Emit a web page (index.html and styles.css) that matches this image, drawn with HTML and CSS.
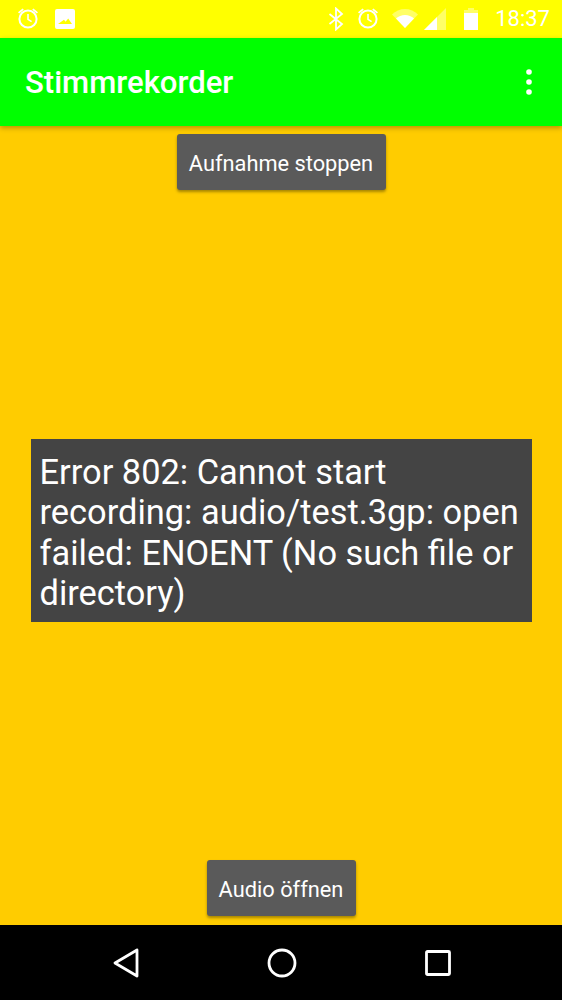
FILE: index.html
```html
<!DOCTYPE html>
<html lang="de">
<head>
<meta charset="utf-8">
<title>Stimmrekorder</title>
<link rel="stylesheet" href="styles.css">
</head>
<body>
<div class="phone">
  <header class="status">
    <div class="status-left">
      <svg class="ic-alarm" viewBox="0 0 24 24"><circle cx="12" cy="13" r="8.6" fill="none" stroke="#fff" stroke-width="2"/><path d="M12 8v5.4l3.6 2.2" fill="none" stroke="#fff" stroke-width="1.6"/><path d="M2 6.2 6.6 2.4 7.8 3.8 3.2 7.6zM22 6.2 17.4 2.4 16.2 3.8 20.8 7.6z" fill="#fff"/></svg>
      <svg class="ic-image" viewBox="0 0 20 20"><path fill-rule="evenodd" d="M2 0h16a2 2 0 0 1 2 2v16a2 2 0 0 1-2 2H2a2 2 0 0 1-2-2V2a2 2 0 0 1 2-2zM3 15h14l-3.800-5.600-2.600 3.400-1.600-2z" fill="#fff"/></svg>
    </div>
    <div class="status-right">
      <svg class="ic-bt" viewBox="0 0 16 24"><path d="M1.500 7 14 17 8 22.500V1.500l6 5.500L1.500 17" fill="none" stroke="#fff" stroke-width="1.800"/></svg>
      <svg class="ic-alarm" viewBox="0 0 24 24"><circle cx="12" cy="13" r="8.600" fill="none" stroke="#fff" stroke-width="2"/><path d="M12 8v5.400l3.600 2.200" fill="none" stroke="#fff" stroke-width="1.600"/><path d="M2 6.200 6.600 2.400 7.800 3.800 3.200 7.600zM22 6.200 17.400 2.400 16.200 3.800 20.800 7.600z" fill="#fff"/></svg>
      <svg class="ic-wifi" viewBox="0 0 26 19"><path d="M0 5.500C3.500 2 8 0 13 0s9.500 2 13 5.500L13 19z" fill="#fff" opacity=".4"/><path d="M4 9.500C6.500 7.300 9.500 6 13 6s6.500 1.300 9 3.500L13 19z" fill="#fff"/></svg>
      <svg class="ic-signal" viewBox="0 0 22 22"><path d="M0 22 22 0v22z" fill="#fff" opacity=".4"/><path d="M0 22 13 9v13z" fill="#fff"/></svg>
      <svg class="ic-battery" viewBox="0 0 14 22"><path d="M0 2h4V0h6v2h4v4H0z" fill="#fff" opacity=".4"/><path d="M0 5h14v17H0z" fill="#fff"/></svg>
      <span class="clock">18:37</span>
    </div>
  </header>
  <div class="appbar">
    <h1 class="title">Stimmrekorder</h1>
    <svg class="overflow" viewBox="0 0 6 26"><circle cx="3" cy="3" r="2.800" fill="#fff"/><circle cx="3" cy="13" r="2.800" fill="#fff"/><circle cx="3" cy="23" r="2.800" fill="#fff"/></svg>
  </div>
  <main class="content">
    <button class="btn btn-stop">Aufnahme stoppen</button>
    <p class="error">Error 802: Cannot start recording: audio/test.3gp: open failed: ENOENT (No such file or directory)</p>
    <button class="btn btn-open">Audio öffnen</button>
  </main>
  <nav class="navbar">
    <svg class="nav-back" viewBox="0 0 26 30"><path d="M24 2 2 15l22 13z" fill="none" stroke="#fff" stroke-width="2.800" stroke-linejoin="round"/></svg>
    <svg class="nav-home" viewBox="0 0 30 30"><circle cx="15" cy="15" r="13" fill="none" stroke="#fff" stroke-width="2.800"/></svg>
    <svg class="nav-recent" viewBox="0 0 26 26"><rect x="1.500" y="1.500" width="23" height="23" rx="1" fill="none" stroke="#fff" stroke-width="2.800"/></svg>
  </nav>
</div>
</body>
</html>
```

FILE: styles.css
```css
* { box-sizing: border-box; }
html, body { margin: 0; padding: 0; }
body { font-family: Roboto, "Liberation Sans", sans-serif; }
.phone { width: 562px; height: 1000px; display: flex; flex-direction: column; background: #ffcc00; overflow: hidden; }
.status { height: 38px; flex: none; background: #ffff00; display: flex; justify-content: space-between; align-items: center; padding: 0 12px 0 16px; }
.status-left, .status-right { display: flex; align-items: center; }
.status-left { gap: 15px; }
.status-left .ic-alarm { width: 24px; height: 24px; margin-bottom: 2px; }
.ic-image { width: 20px; height: 20px; margin-bottom: 1px; }
.ic-bt { width: 16px; height: 24px; margin-bottom: 1px; }
.status-right .ic-alarm { width: 24px; height: 24px; margin-left: 12px; margin-bottom: 2px; }
.ic-wifi { width: 26px; height: 19px; margin-left: 12px; margin-bottom: 1px; }
.ic-signal { width: 22px; height: 22px; margin-left: 6px; }
.ic-battery { width: 14px; height: 22px; margin-left: 18px; margin-bottom: 1px; }
.clock { color: #fff; font-size: 22px; margin-left: 17px; line-height: 24px; }
.appbar { height: 88px; flex: none; background: #00ff00; display: flex; align-items: center; justify-content: space-between; padding: 0 30px 0 25px; box-shadow: 0 2px 5px rgba(0,0,0,.28); position: relative; z-index: 1; }
.title { margin: 0 0 -2px; color: #fff; font-size: 31.100px; font-weight: 500; line-height: 36px; }
.overflow { width: 6px; height: 26px; }
.content { flex: 1; display: flex; flex-direction: column; align-items: center; justify-content: space-between; padding: 8px 0 9px; }
.btn { border: 0; border-radius: 3px; background: #5a5a5a; color: #fff; font-family: inherit; font-size: 21.800px; height: 56px; padding: 2px 0 0; box-shadow: 0 2px 3px rgba(0,0,0,.35); }
.btn-stop { width: 209px; }
.btn-open { width: 149px; }
.error { margin: 10px 0 0; width: 501px; background: #444444; color: #fff; font-size: 34.400px; line-height: 40.500px; padding: 13px 9px 8px; }
.navbar { height: 75px; flex: none; background: #000; display: flex; align-items: center; justify-content: space-between; padding: 0 111px 0 113px; }
.nav-back { width: 26px; height: 30px; }
.nav-home { width: 30px; height: 30px; }
.nav-recent { width: 26px; height: 26px; }
```
